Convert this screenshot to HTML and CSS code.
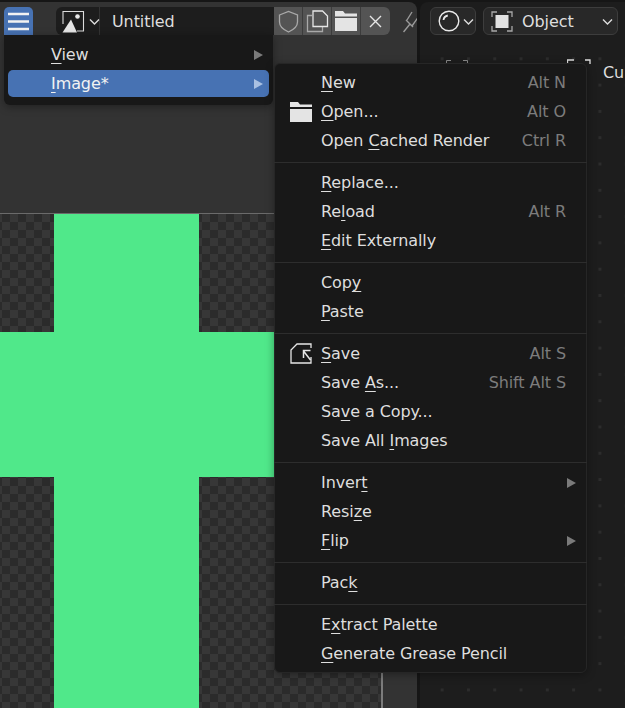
FILE: index.html
```html
<!DOCTYPE html>
<html lang="en">
<head>
<meta charset="utf-8">
<title>Image Editor</title>
<link rel="stylesheet" href="styles.css">
</head>
<body>
<div class="app">
  <section class="editor">
    <header class="editor-header">
      <button class="menu-btn" aria-label="Menu">
        <svg width="21" height="19" viewBox="0 0 21 19"><path d="M0 2h21M0 9.500h21M0 17h21" stroke="#f2f2f2" stroke-width="2.600"/></svg>
      </button>
      <div class="id-field">
        <div class="id-type">
          <svg width="23" height="23" viewBox="0 0 23 23"><path d="M1 14V1.500H21.500V21H15" fill="none" stroke="#dcdcdc" stroke-width="1.100"/><path d="M9 9.500 15 22.500H.5z" fill="#e6e6e6"/><circle cx="15.500" cy="6.500" r="2.300" fill="#e6e6e6"/></svg>
          <svg class="chev" width="11" height="7" viewBox="0 0 11 7"><path d="M1 1.500 5.500 6 10 1.500" fill="none" stroke="#dcdcdc" stroke-width="1.400"/></svg>
        </div>
        <div class="id-name">Untitled</div>
      </div>
      <div class="id-actions">
        <button class="id-act">
          <svg width="21" height="23" viewBox="0 0 21 23"><path d="M1.500 5 10.500 1.500 19.500 5V12C19.500 17 15 20 10.500 22 6 20 1.500 17 1.500 12Z" fill="none" stroke="#a9a9a9" stroke-width="1.300"/></svg>
        </button>
        <button class="id-act">
          <svg width="23" height="23" viewBox="0 0 23 23"><path d="M6 5.500H1.500V21.500H16.500V17" fill="none" stroke="#a9a9a9" stroke-width="1.300"/><path d="M7 1H16.500L21.500 6V16.500H7Z" fill="none" stroke="#e6e6e6" stroke-width="1.300"/></svg>
        </button>
        <button class="id-act">
          <svg width="22" height="20" viewBox="0 0 22 20"><path d="M0 0H8L10 2.500H22V5.500H0ZM0 7H22V20H0Z" fill="#e4e4e4"/></svg>
        </button>
        <button class="id-act id-act-last">
          <svg width="13" height="13" viewBox="0 0 13 13"><path d="M1 1 12 12M12 1 1 12" stroke="#e6e6e6" stroke-width="1.400"/></svg>
        </button>
      </div>
      <svg class="pin" width="16" height="22" viewBox="0 0 16 22"><path d="M.500 21 7 13M3 9 10 16M9 1 4 9M16 5 9 15" fill="none" stroke="#9a9a9a" stroke-width="1.400"/></svg>
    </header>
    <div class="editor-body">
      <div class="canvas">
        <div class="cell"></div><div class="cell green"></div><div class="cell"></div>
        <div class="cell green"></div><div class="cell green"></div><div class="cell green"></div>
        <div class="cell"></div><div class="cell green"></div><div class="cell"></div>
      </div>
    </div>
  </section>

  <section class="outliner">
    <header class="outliner-header">
      <button class="pill pill-mode">
        <svg width="22" height="22" viewBox="0 0 22 22"><circle cx="11" cy="11" r="9.800" fill="none" stroke="#e8e8e8" stroke-width="1.400"/><path d="M5.500 10C5.800 7.800 7.500 6 9.800 5.500" fill="none" stroke="#e8e8e8" stroke-width="1.800"/></svg>
        <svg class="chev" width="11" height="7" viewBox="0 0 11 7"><path d="M1 1.500 5.500 6 10 1.500" fill="none" stroke="#dcdcdc" stroke-width="1.400"/></svg>
      </button>
      <button class="pill pill-object">
        <svg width="22" height="21" viewBox="0 0 22 21"><path d="M1 6V1H6M16 1H21V6M1 15V20H6M16 20H21V15" fill="none" stroke="#a8a8a8" stroke-width="1.300"/><rect x="4.500" y="4" width="13" height="13" fill="#e2e2e2"/></svg>
        <span class="pill-label">Object</span>
        <svg class="chev" width="11" height="7" viewBox="0 0 11 7"><path d="M1 1.500 5.500 6 10 1.500" fill="none" stroke="#dcdcdc" stroke-width="1.400"/></svg>
      </button>
    </header>
    <div class="tree">
      <span class="tree-label">Cu</span>
    </div>
  </section>
</div>

<svg class="frag frag-a" width="22" height="4" viewBox="0 0 22 4"><path d="M.500 4V.500H5M17 .500H21.500V4" fill="none" stroke="#8a8a8a" stroke-width="1"/></svg>
<svg class="frag frag-b" width="24" height="5" viewBox="0 0 24 5"><path d="M.500 5V1H7M18 1H23V5" fill="none" stroke="#e0e0e0" stroke-width="1.300"/></svg>

<nav class="popup">
  <div class="pop-item"><span class="label"><span class="u">V</span>iew</span><span class="arrow"></span></div>
  <div class="pop-item pop-active"><span class="label"><span class="u">I</span>mage*</span><span class="arrow"></span></div>
</nav>

<nav class="menu">
  <div class="row"><span class="slot"></span><span class="label"><span class="u">N</span>ew</span><span class="key">Alt N</span></div>
  <div class="row"><span class="slot"><svg width="22" height="20" viewBox="0 0 22 20"><path d="M0 0H8L10 2.500H22V5H0ZM0 7H22V20H0Z" fill="#e4e4e4"/></svg></span><span class="label"><span class="u">O</span>pen...</span><span class="key">Alt O</span></div>
  <div class="row"><span class="slot"></span><span class="label">Open <span class="u">C</span>ached Render</span><span class="key">Ctrl R</span></div>
  <div class="sep"></div>
  <div class="row"><span class="slot"></span><span class="label"><span class="u">R</span>eplace...</span></div>
  <div class="row"><span class="slot"></span><span class="label">Re<span class="u">l</span>oad</span><span class="key">Alt R</span></div>
  <div class="row"><span class="slot"></span><span class="label"><span class="u">E</span>dit Externally</span></div>
  <div class="sep"></div>
  <div class="row"><span class="slot"></span><span class="label">Cop<span class="u">y</span></span></div>
  <div class="row"><span class="slot"></span><span class="label"><span class="u">P</span>aste</span></div>
  <div class="sep"></div>
  <div class="row"><span class="slot"><svg width="22" height="21" viewBox="0 0 22 21"><path d="M21 5V1H7L1 7V20H21V14" fill="none" stroke="#e6e6e6" stroke-width="1.300"/><path d="M20.500 17 13.500 8M13.500 15V7.500H20.500" fill="none" stroke="#e6e6e6" stroke-width="1.500"/></svg></span><span class="label"><span class="u">S</span>ave</span><span class="key">Alt S</span></div>
  <div class="row"><span class="slot"></span><span class="label">Save <span class="u">A</span>s...</span><span class="key">Shift Alt S</span></div>
  <div class="row"><span class="slot"></span><span class="label">Sa<span class="u">v</span>e a Copy...</span></div>
  <div class="row"><span class="slot"></span><span class="label">Save All <span class="u">I</span>mages</span></div>
  <div class="sep"></div>
  <div class="row"><span class="slot"></span><span class="label">Inver<span class="u">t</span></span><span class="arrow"></span></div>
  <div class="row"><span class="slot"></span><span class="label">Resi<span class="u">z</span>e</span></div>
  <div class="row"><span class="slot"></span><span class="label"><span class="u">F</span>lip</span><span class="arrow"></span></div>
  <div class="sep"></div>
  <div class="row"><span class="slot"></span><span class="label">Pac<span class="u">k</span></span></div>
  <div class="sep"></div>
  <div class="row"><span class="slot"></span><span class="label">E<span class="u">x</span>tract Palette</span></div>
  <div class="row"><span class="slot"></span><span class="label"><span class="u">G</span>enerate Grease Pencil</span></div>
</nav>
</body>
</html>
```
FILE: styles.css
```css
* { box-sizing: border-box; }

html, body {
  margin: 0;
  height: 100%;
  overflow: hidden;
}

body {
  background: #161616;
  color: #dedede;
  font-family: "DejaVu Sans", sans-serif;
  font-size: 16px;
  letter-spacing: -0.09px;
}

button {
  margin: 0;
  padding: 0;
  border: 0;
  color: inherit;
  font: inherit;
  letter-spacing: inherit;
}

svg { display: block; flex: none; }

.app {
  display: flex;
  gap: 3px;
  height: 708px;
  padding-top: 2px;
}

/* Image editor */
.editor {
  display: flex;
  flex-direction: column;
  flex: none;
  width: 417px;
  background: #333333;
  border-radius: 0 8px 0 0;
  overflow: hidden;
}

.editor-header {
  display: flex;
  align-items: flex-start;
  flex: none;
  height: 211px;
  padding: 5px 0 0 4px;
}

.menu-btn {
  display: flex;
  flex: none;
  align-items: center;
  justify-content: center;
  width: 29px;
  height: 28px;
  background: #4772b3;
  border-radius: 5px 5px 0 0;
}

.id-field {
  display: flex;
  flex: none;
  width: 218px;
  height: 28px;
  margin-left: 23px;
  background: #1d1d1d;
  border-radius: 6px 0 0 6px;
}

.id-type {
  display: flex;
  flex: none;
  align-items: center;
  gap: 4px;
  width: 44px;
  padding-left: 6px;
  border-right: 1px solid #333333;
}

.id-name {
  padding: 1px 0 0 12px;
  line-height: 28px;
}

.id-actions {
  display: flex;
  flex: none;
  height: 28px;
}

.id-act {
  display: flex;
  flex: none;
  align-items: center;
  justify-content: center;
  width: 29px;
  background: #545454;
  border-right: 1px solid #3c3c3c;
}

.id-act-last {
  border-right: 0;
  border-radius: 0 6px 6px 0;
}

.pin {
  margin: 4px 0 0 13px;
}

.editor-body {
  flex: 1;
  min-height: 0;
}

.canvas {
  display: grid;
  grid-template-columns: 54px 145px 1fr;
  grid-template-rows: 118px 145px 1fr;
  width: 383px;
  height: 100%;
  border-top: 1px solid #6b6b6b;
  border-right: 2px solid #7c7c7c;
  background-color: #2b2b2b;
  background-image:
    linear-gradient(45deg, #373737 25%, transparent 25%, transparent 75%, #373737 75%),
    linear-gradient(45deg, #373737 25%, transparent 25%, transparent 75%, #373737 75%);
  background-size: 16px 16px;
  background-position: 2px 0, 10px 8px;
}

.green { background: #50e88a; }

/* Outliner */
.outliner {
  flex: 1;
  display: flex;
  flex-direction: column;
  min-width: 0;
  background-color: #1d1d1d;
  border-radius: 8px 0 0 0;
  overflow: hidden;
}

.outliner-header {
  display: flex;
  gap: 7px;
  flex: none;
  height: 50px;
  padding: 5px 7px 0 10px;
}

.pill {
  display: flex;
  flex: none;
  align-items: center;
  height: 28px;
  background: #282828;
  border: 1px solid #3d3d3d;
  border-radius: 6px;
}

.pill-mode {
  gap: 3px;
  width: 46px;
  padding-left: 7px;
}

.pill-object {
  width: 135px;
  padding: 0 4px 0 7px;
}

.pill-label {
  flex: 1;
  padding-left: 9px;
  text-align: left;
}

.tree {
  flex: 1;
  padding: 11px 0 0 183px;
  background-image: radial-gradient(circle at center, #2c2c2c 1.400px, transparent 1.800px);
  background-size: 26.300px 26.300px;
  background-position: 9px -6.350px;
}

.tree-label {
  line-height: 20px;
}

.frag {
  position: absolute;
}

.frag-a { left: 446px; top: 60px; }
.frag-b { left: 567px; top: 59px; }

/* Menus */
.popup,
.menu {
  position: absolute;
  background: #181818;
  box-shadow: 0 2px 8px rgba(0, 0, 0, .35);
}

.popup {
  left: 4px;
  top: 35px;
  width: 269px;
  height: 70px;
  padding: 5px 4px;
  border-radius: 0 0 6px 6px;
}

.pop-item {
  display: flex;
  align-items: center;
  height: 29px;
  padding: 0 6px 0 43px;
}

.pop-active {
  height: 27px;
  margin-top: 1px;
  background: #4772b3;
  border-radius: 5px;
  color: #f2f2f2;
}

.menu {
  left: 274px;
  top: 63px;
  width: 313px;
  height: 610px;
  padding: 4px 0;
  border: 1px solid #262626;
  border-radius: 6px;
}

.row {
  display: flex;
  align-items: center;
  height: 29px;
  margin-left: -1px;
  margin-right: -1px;
  padding-right: 21px;
}

.slot {
  display: flex;
  justify-content: flex-start;
  width: 47px;
  padding-left: 16px;
  flex: none;
}

.label {
  flex: 1;
  white-space: pre;
}

.key {
  color: #7c7c7c;
}

.u {
  text-decoration: underline;
  text-decoration-thickness: 1px;
  text-underline-offset: 3px;
  text-decoration-skip-ink: none;
}

.arrow {
  flex: none;
  width: 0;
  height: 0;
  border-left: 9px solid #7a7a7a;
  border-top: 5px solid transparent;
  border-bottom: 5px solid transparent;
}

.row .arrow {
  margin-right: -10px;
}

.pop-active .arrow {
  border-left-color: #a9c0e2;
}

.sep {
  height: 13px;
  padding-top: 7px;
  margin: 0 -1px;
}

.sep::after {
  content: "";
  display: block;
  height: 1px;
  background: #2d2d2d;
}
```
